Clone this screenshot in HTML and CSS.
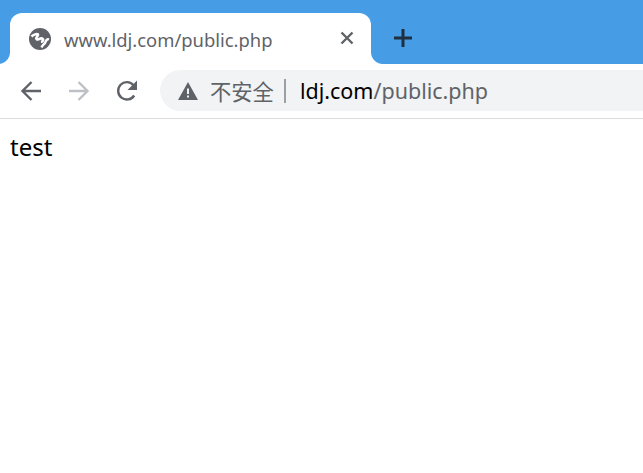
FILE: index.html
```html
<!DOCTYPE html>
<html lang="zh">
<head>
<meta charset="utf-8">
<title>www.ldj.com/public.php</title>
<link rel="stylesheet" href="styles.css">
</head>
<body>
<div class="tabstrip">
  <div class="tab">
    <svg class="favicon" viewBox="0 0 22 22"><circle cx="11" cy="11" r="11" fill="#5f6368"/><path d="M2.500 8.500C4.500 6.500 8 5.500 9 6.500C9.500 8 6.500 9 7.500 11C9.500 13 11 9.500 13 10.500C15 11.500 14 13.500 12 14" stroke="#fff" stroke-width="2.600" fill="none"/><path d="M20 11.500C17.500 10.500 17 13 16 15C15 16.500 13.500 17 12.500 19.500" stroke="#fff" stroke-width="2.400" fill="none"/></svg>
    <span class="tab-title">www.ldj.com/public.php</span>
    <svg class="tab-close" viewBox="0 0 14 14"><path d="M1.500 1.500L12.500 12.500M12.500 1.500L1.500 12.500" stroke="#5f6368" stroke-width="2.400" fill="none"/></svg>
  </div>
  <svg class="new-tab" viewBox="0 0 18 18"><path d="M9 0V18M0 9H18" stroke="#202f3f" stroke-width="3" fill="none"/></svg>
</div>
<div class="toolbar">
  <svg class="nav" viewBox="0 0 22 22"><path d="M21 11H3M11.500 2L2.500 11L11.500 20" stroke="#5f6368" stroke-width="2.400" fill="none"/></svg>
  <svg class="nav" viewBox="0 0 22 22"><path d="M1 11H19M10.500 2L19.500 11L10.500 20" stroke="#bdc1c6" stroke-width="2.400" fill="none"/></svg>
  <svg class="nav" viewBox="0 0 22 22"><path d="M18.200 15.500A8.700 8.700 0 1 1 17.500 5.200" stroke="#5f6368" stroke-width="2.400" fill="none"/><path d="M21 0.500V10H11.500z" fill="#5f6368"/></svg>
  <div class="omnibox">
    <svg class="warn" viewBox="0 0 20 18"><path fill="#5f6368" fill-rule="evenodd" d="M10 0L20 18H0zM9 6.500V12H11V6.500zM9 13.500V15.500H11V13.500z"/></svg>
    <span class="insecure">不安全</span>
    <span class="divider"></span>
    <span class="url"><span class="host">ldj.com</span>/public.php</span>
  </div>
</div>
<main class="content">test</main>
</body>
</html>
```
FILE: styles.css
```css
html, body {
  margin: 0;
  height: 100%;
  overflow: hidden;
  background: #fff;
  font-family: "Noto Sans", "Noto Sans CJK SC", sans-serif;
}
.tabstrip {
  height: 64px;
  box-sizing: border-box;
  padding: 13px 0 0 10px;
  background: #469ce5;
  display: flex;
  align-items: flex-start;
}
.tab {
  position: relative;
  width: 361px;
  height: 51px;
  box-sizing: border-box;
  padding: 0 17px 0 19px;
  background: #fff;
  border-radius: 12px 12px 0 0;
  display: flex;
  align-items: center;
}
.tab::before, .tab::after {
  content: "";
  position: absolute;
  bottom: 0;
  width: 12px;
  height: 12px;
}
.tab::before {
  left: -12px;
  background: radial-gradient(circle at 0 0, #469ce5 11.5px, #fff 12.5px);
}
.tab::after {
  right: -12px;
  background: radial-gradient(circle at 100% 0, #469ce5 11.5px, #fff 12.5px);
}
.favicon {
  width: 22px;
  height: 22px;
  flex: none;
}
.tab-title {
  margin-left: 13px;
  flex: 1;
  font-size: 18.400px;
  color: #5f6368;
  white-space: nowrap;
  margin-top: 2px;
}
.tab-close {
  width: 14px;
  height: 14px;
  margin-top: -1px;
  flex: none;
}
.new-tab {
  width: 18px;
  height: 18px;
  margin: 16px 0 0 23px;
  flex: none;
}
.toolbar {
  height: 55px;
  box-sizing: border-box;
  border-bottom: 1px solid #dadce0;
  padding: 6px 0 0 20px;
  display: flex;
  align-items: flex-start;
  gap: 26px;
  overflow: hidden;
}
.nav {
  width: 22px;
  height: 22px;
  margin-top: 10px;
  flex: none;
}
.omnibox {
  flex: none;
  width: 520px;
  height: 41px;
  margin-left: -4px;
  box-sizing: border-box;
  padding-left: 18px;
  background: #f1f3f4;
  border-radius: 21px 0 0 21px;
  display: flex;
  align-items: center;
}
.warn {
  width: 20px;
  height: 18px;
  flex: none;
}
.insecure {
  margin-left: 12px;
  font-size: 21.300px;
  color: #5f6368;
  white-space: nowrap;
}
.divider {
  width: 2px;
  height: 24px;
  margin: 0 14px 0 10px;
  background: #9aa0a6;
  flex: none;
}
.url {
  font-size: 21.500px;
  color: #5f6368;
  white-space: nowrap;
}
.host {
  color: #000;
}
.content {
  padding: 11px 0 0 10px;
  font-size: 24px;
  line-height: 34px;
  color: #000;
}
```
